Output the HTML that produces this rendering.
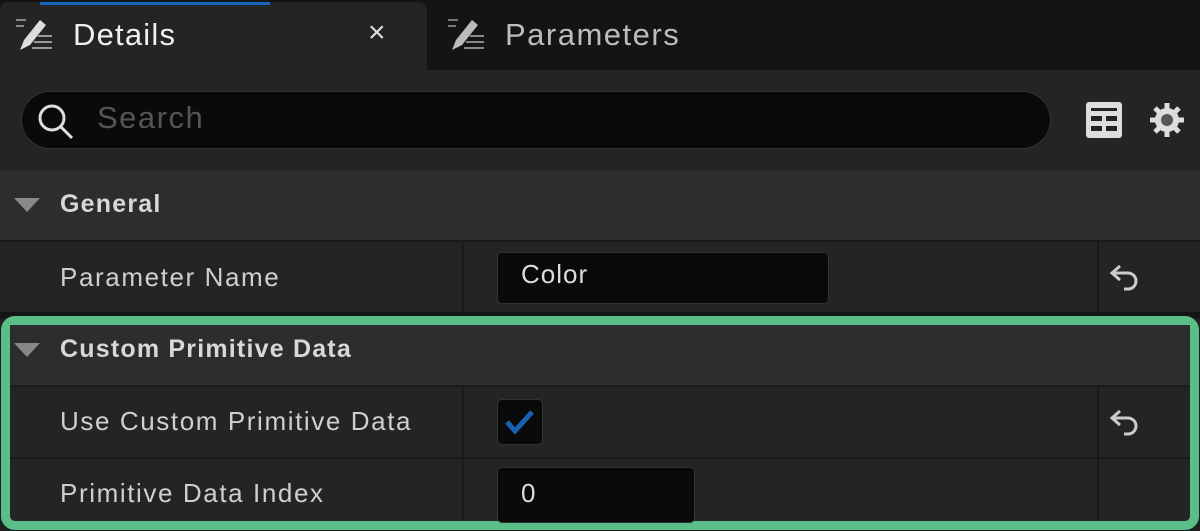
<!DOCTYPE html><html><head><style>
body{margin:0;width:1200px;height:531px;background:#1f1f1f;font-family:"Liberation Sans",sans-serif;position:relative;overflow:hidden;color:#c8c8c8}
.a{position:absolute}
.l{font-size:26px;letter-spacing:1.6px;color:#cfcfcf}
.h{font-size:25px;font-weight:bold;letter-spacing:1.2px;color:#d8d8d8}
</style></head><body>
<div class="a" style="left:0;top:0;width:1200px;height:70px;background:#141414"></div>
<div class="a" style="left:0;top:2px;width:427px;height:68px;background:#242424;border-radius:8px 8px 0 0"></div>
<div class="a" style="left:40px;top:2px;width:230px;height:3px;background:#1565c0"></div>
<svg class="a" style="left:12px;top:12px" width="42" height="42" viewBox="0 0 42 42"><path d="M4 8h10M4 14h8" stroke="#888" stroke-width="2"/><path d="M8 38l4-10 16-20 6 5-16 20z" fill="#ddd"/><path d="M22 30h18M20 36h20M26 24h14" stroke="#999" stroke-width="2"/></svg>
<div class="a" style="left:73px;top:17px;font-size:31px;letter-spacing:1.2px;color:#f0f0f0">Details</div>
<div class="a" style="left:368px;top:16px;font-size:30px;color:#ddd">×</div>
<svg class="a" style="left:444px;top:12px" width="42" height="42" viewBox="0 0 42 42"><path d="M4 8h10M4 14h8" stroke="#777" stroke-width="2"/><path d="M8 38l4-10 16-20 6 5-16 20z" fill="#bbb"/><path d="M22 30h18M20 36h20M26 24h14" stroke="#888" stroke-width="2"/></svg>
<div class="a" style="left:505px;top:17px;font-size:31px;letter-spacing:1.5px;color:#bdbdbd">Parameters</div>
<div class="a" style="left:0;top:70px;width:1200px;height:100px;background:#242424"></div>
<div class="a" style="left:21px;top:91px;width:1028px;height:56px;background:#0a0a0a;border:1px solid #333;border-radius:29px"></div>
<svg class="a" style="left:34px;top:100px" width="44" height="44"><circle cx="18" cy="18" r="12" fill="none" stroke="#ddd" stroke-width="3"/><path d="M27 27l11 11" stroke="#ddd" stroke-width="3"/></svg>
<div class="a" style="left:97px;top:100px;font-size:31px;letter-spacing:1.5px;color:#555">Search</div>
<svg class="a" style="left:1084px;top:100px" width="40" height="40"><rect x="2" y="2" width="36" height="36" rx="3" fill="#ddd"/><rect x="7" y="8" width="26" height="3" fill="#222"/><rect x="7" y="16" width="11" height="5" fill="#222"/><rect x="22" y="16" width="11" height="5" fill="#222"/><rect x="7" y="26" width="11" height="5" fill="#222"/><rect x="22" y="26" width="11" height="5" fill="#222"/></svg>
<svg class="a" style="left:1148px;top:101px" width="38" height="38" viewBox="0 0 38 38"><g stroke="#ddd" stroke-width="5"><path d="M19 2v34M2 19h34M7 7l24 24M31 7L7 31"/></g><circle cx="19" cy="19" r="12" fill="#ddd"/><circle cx="19" cy="19" r="6" fill="#555"/></svg>
<div class="a" style="left:0;top:170px;width:1200px;height:70px;background:#2d2d2d;border-bottom:2px solid #1a1a1a"></div>
<div class="a" style="left:14px;top:198px;border-left:13px solid transparent;border-right:13px solid transparent;border-top:14px solid #888"></div>
<div class="a h" style="left:60px;top:190px">General</div>
<div class="a" style="left:0;top:242px;width:1200px;height:70px;background:#242424"></div>
<div class="a" style="left:462px;top:242px;width:2px;height:70px;background:#1a1a1a"></div>
<div class="a" style="left:1097px;top:242px;width:2px;height:70px;background:#1a1a1a"></div>
<div class="a l" style="left:60px;top:262px">Parameter Name</div>
<div class="a" style="left:497px;top:252px;width:330px;height:50px;background:#0a0a0a;border:1px solid #333;border-radius:5px"></div>
<div class="a" style="left:521px;top:259px;font-size:26px;letter-spacing:1px;color:#ddd">Color</div>
<svg class="a" style="left:1108px;top:262px" width="36" height="32"><path d="M12 4L4 11l8 7M4 11h16a8 8 0 0 1 0 16h-4" fill="none" stroke="#ccc" stroke-width="3"/></svg>
<div class="a" style="left:0;top:312px;width:1200px;height:6px;background:#141414"></div>
<div class="a" style="left:1px;top:316px;width:1180px;height:196px;border:9px solid #5bbd87;border-radius:14px;background:#242424"></div>
<div class="a" style="left:10px;top:325px;width:1180px;height:60px;background:#2d2d2d;border-bottom:2px solid #1a1a1a"></div>
<div class="a" style="left:14px;top:343px;border-left:13px solid transparent;border-right:13px solid transparent;border-top:14px solid #888"></div>
<div class="a h" style="left:60px;top:335px">Custom Primitive Data</div>
<div class="a" style="left:10px;top:457px;width:1180px;height:2px;background:#1a1a1a"></div>
<div class="a" style="left:462px;top:387px;width:2px;height:134px;background:#1a1a1a"></div>
<div class="a" style="left:1097px;top:387px;width:2px;height:134px;background:#1a1a1a"></div>
<div class="a l" style="left:60px;top:406px">Use Custom Primitive Data</div>
<div class="a" style="left:497px;top:399px;width:44px;height:44px;background:#0a0a0a;border:1px solid #333;border-radius:5px"></div>
<svg class="a" style="left:503px;top:407px" width="34" height="30"><path d="M4 15l8 9L29 5" fill="none" stroke="#1a5fb4" stroke-width="5"/></svg>
<svg class="a" style="left:1108px;top:407px" width="36" height="32"><path d="M12 4L4 11l8 7M4 11h16a8 8 0 0 1 0 16h-4" fill="none" stroke="#ccc" stroke-width="3"/></svg>
<div class="a l" style="left:60px;top:478px">Primitive Data Index</div>
<div class="a" style="left:497px;top:467px;width:196px;height:54px;background:#0a0a0a;border:1px solid #333;border-radius:5px"></div>
<div class="a" style="left:521px;top:478px;font-size:26px;color:#ddd">0</div>
</body></html>
